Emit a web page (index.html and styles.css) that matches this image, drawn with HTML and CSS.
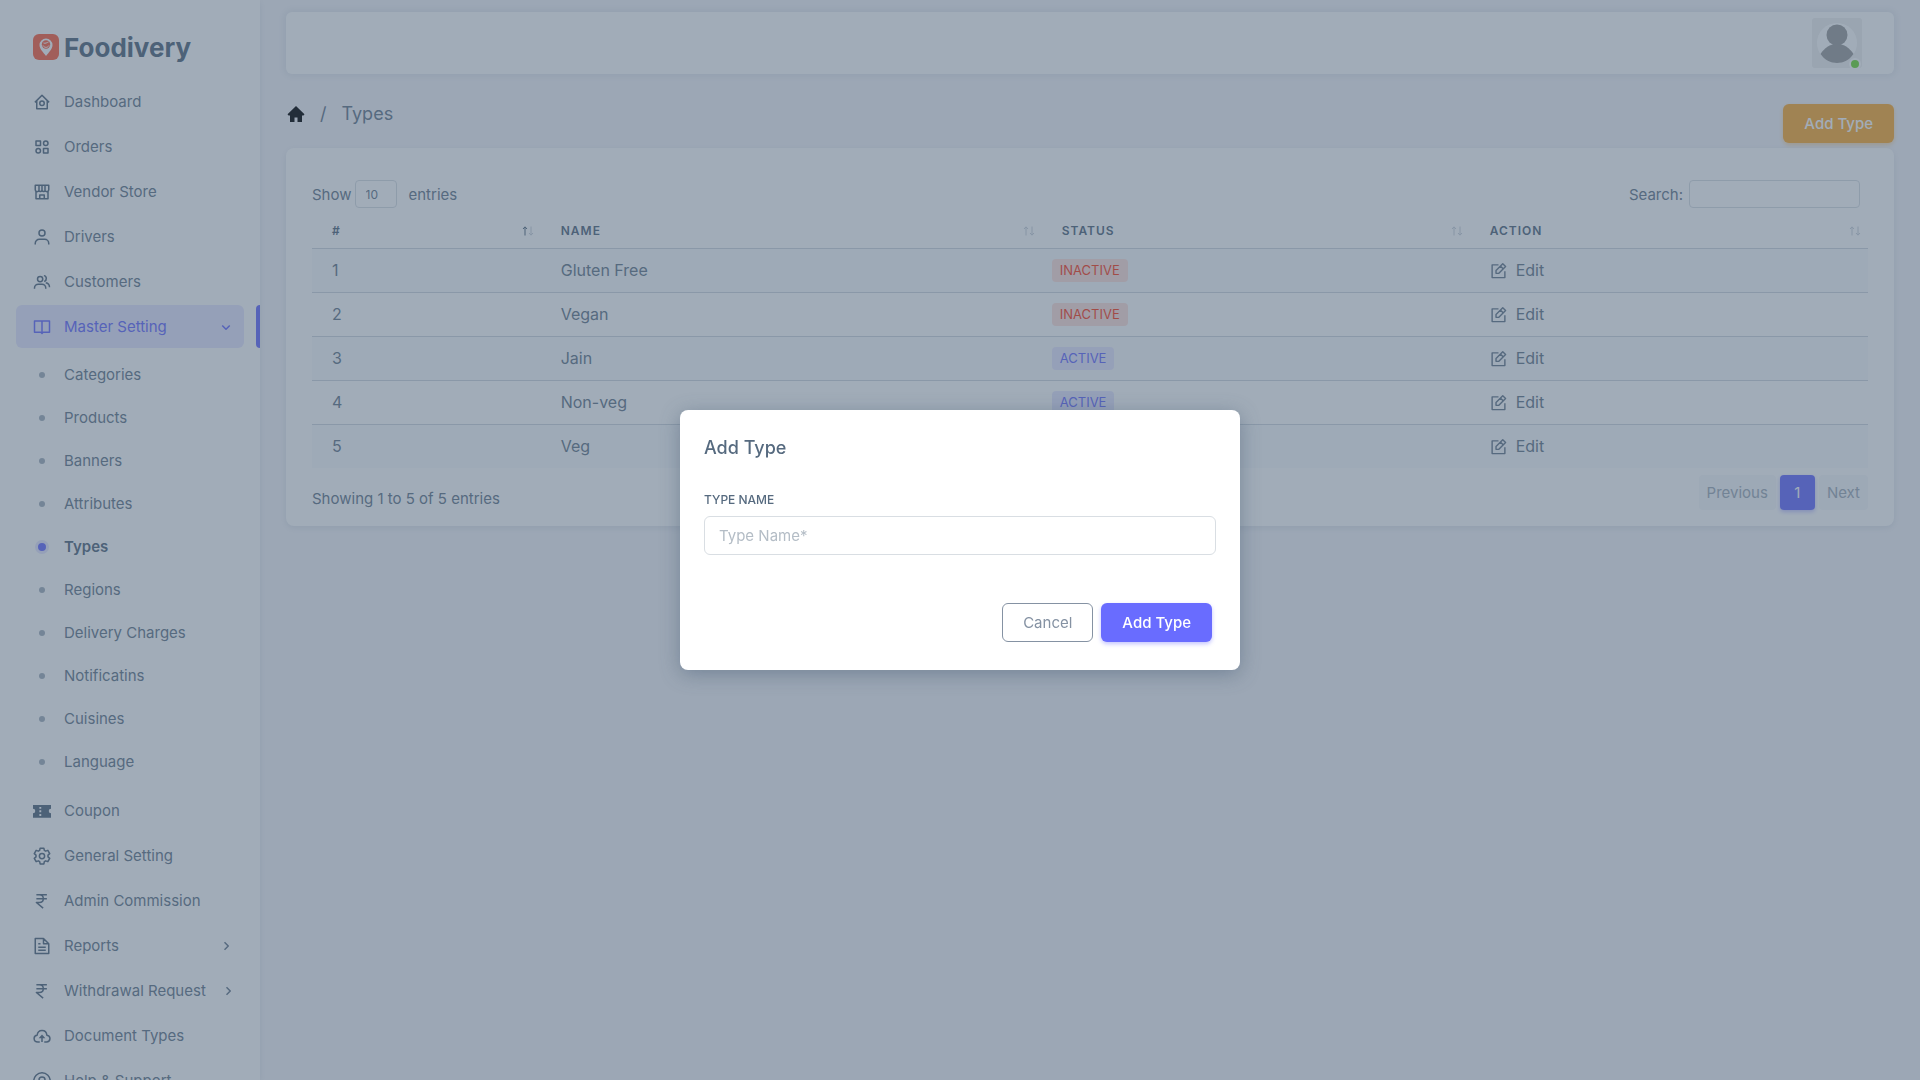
FILE: index.html
```
<!DOCTYPE html>
<html lang="en">
<head>
    <meta charset="UTF-8">
    <meta name="viewport" content="width=device-width, initial-scale=1.0">
    <title>Types - Foodivery</title>
    <link rel="stylesheet" href="styles.css">
</head>
<body>

    <svg class="sprite" aria-hidden="true">
        <symbol id="i-home" viewBox="0 0 24 24"><path d="M2.5 12.5 12 3l9.500 9.500M5 10.500V21h14V10.500"/><circle cx="12" cy="13.500" r="3"/></symbol>
        <symbol id="i-grid" viewBox="0 0 24 24"><path d="M4 4h6v6H4zM14 14h6v6h-6z"/><circle cx="17" cy="7" r="3"/><circle cx="7" cy="17" r="3"/></symbol>
        <symbol id="i-store" viewBox="0 0 24 24"><path d="M4 11v10h16V11M3 3h18v6a2.500 2.500 0 0 1-4.500 1.500A3 3 0 0 1 12 10a3 3 0 0 1-4.500.500A2.500 2.500 0 0 1 3 9zM8 3v7M12 3v7M16 3v7M9 21v-5h6v5"/></symbol>
        <symbol id="i-user" viewBox="0 0 24 24"><circle cx="12" cy="6.500" r="4"/><path d="M3 22v-1.500a5.500 5.500 0 0 1 5.500-5.500h7a5.500 5.500 0 0 1 5.500 5.500V22"/></symbol>
        <symbol id="i-users" viewBox="0 0 24 24"><circle cx="9.500" cy="8" r="3.500"/><path d="M2 21v-1a5 5 0 0 1 5-5h5a5 5 0 0 1 5 5v1M14.500 3.500c4 .5 4.500 6 .5 8M17 13c3 .5 5 3 5 6"/></symbol>
        <symbol id="i-book" viewBox="0 0 24 24"><path d="M2 4h20v15h-8.500L12 20.500 10.500 19H2zM12 4v16"/></symbol>
        <symbol id="i-coupon" viewBox="0 0 24 24"><path class="fill" fill-rule="evenodd" d="M0 4h24v5a3 3 0 0 0 0 6v6H0v-6a3 3 0 0 0 0-6zM8.500 6.500v2.500h2.500V6.500zM8.500 11v2.500h2.500V11zM8.500 16v2.500h2.500V16z"/></symbol>
        <symbol id="i-cog" viewBox="0 0 24 24"><circle cx="12" cy="12" r="3.500"/><path d="M9.500 1.500h5l.6 3 1.800 1 2.900-1 2.500 4.300-2.300 2v2.400l2.300 2-2.500 4.300-2.900-1-1.800 1-.6 3h-5l-.6-3-1.800-1-2.900 1-2.500-4.300 2.300-2v-2.400l-2.300-2 2.500-4.300 2.900 1 1.800-1z"/></symbol>
        <symbol id="i-rupee" viewBox="0 0 24 24"><path d="M4.500 3.500h14M4.500 9h14M4.500 3.500h4c7 0 7 10.500 0 10.500h-4l9 7.500"/></symbol>
        <symbol id="i-file" viewBox="0 0 24 24"><path d="M3 2h11l7 7v13H3zM14 2v7h7M7 9h3M7 13.500h10M7 17.500h10"/></symbol>
        <symbol id="i-cloud" viewBox="0 0 24 24"><path d="M9 20H6.500C0 20 0 11.500 5.500 11c1-8 12-8.500 13 0 6 1 5 9-.5 9h-3M12 20v-6"/><path class="fill" d="m7.500 15 4.500-5 4.500 5z"/></symbol>
        <symbol id="i-help" viewBox="0 0 24 24"><circle cx="12" cy="12" r="11"/><path d="M8 10.500c0-5.500 8-5 8-.5 0 2.500-4 2.500-4 5M12 17v2"/></symbol>
        <symbol id="i-down" viewBox="0 0 24 24"><path d="m7 10 5 5 5-5"/></symbol>
        <symbol id="i-right" viewBox="0 0 24 24"><path d="m10 7 5 5-5 5"/></symbol>
        <symbol id="i-sort" viewBox="0 0 12 10"><path class="up" d="M3 9.500V1M1 3l2-2.200L5 3"/><path class="down" d="M9 .5V9M7 7l2 2.200L11 7"/></symbol>
        <symbol id="i-sort-asc" viewBox="0 0 12 10"><path stroke="#566a7f" d="M3 9.500V1M1 3l2-2.200L5 3"/><path d="M9 .5V9M7 7l2 2.200L11 7"/></symbol>
        <symbol id="i-edit" viewBox="0 0 24 24"><path d="M12 4H3v18h18V13M8.500 16v-4l9.500-9.500 4 4-9.500 9.500zM15 6l3.500 3.500"/></symbol>
    </svg>

    <div class="layout">
        <aside class="sidebar">
            <a href="#" class="brand">
                <svg class="brand-logo" viewBox="0 0 26 26" aria-hidden="true">
                    <rect width="26" height="26" rx="6" fill="#ff6243"/>
                    <path d="M13 22C10 18 6.500 15 6.500 11a6.500 6.500 0 0 1 13 0c0 4-3.500 7-6.500 11z" fill="#fff"/>
                    <circle cx="13" cy="10.500" r="4.200" fill="#ff6243"/>
                    <path d="M10 11.500c1.500 2.500 4.500 2.500 6 0M10.500 9c2 .8 3.500-.5 5-1" fill="none" stroke="#fff"/>
                </svg>
                <span>Foodivery</span>
            </a>
            <nav class="menu">
                <a href="#" class="menu-link"><svg class="icon"><use href="#i-home"/></svg>Dashboard</a>
                <a href="#" class="menu-link"><svg class="icon"><use href="#i-grid"/></svg>Orders</a>
                <a href="#" class="menu-link"><svg class="icon"><use href="#i-store"/></svg>Vendor Store</a>
                <a href="#" class="menu-link"><svg class="icon"><use href="#i-user"/></svg>Drivers</a>
                <a href="#" class="menu-link"><svg class="icon"><use href="#i-users"/></svg>Customers</a>
                <a href="#" class="menu-link active"><svg class="icon"><use href="#i-book"/></svg>Master Setting<svg class="icon arrow"><use href="#i-down"/></svg></a>
                <div class="menu-sub">
                    <a href="#" class="sub-link">Categories</a>
                    <a href="#" class="sub-link">Products</a>
                    <a href="#" class="sub-link">Banners</a>
                    <a href="#" class="sub-link">Attributes</a>
                    <a href="#" class="sub-link active">Types</a>
                    <a href="#" class="sub-link">Regions</a>
                    <a href="#" class="sub-link">Delivery Charges</a>
                    <a href="#" class="sub-link">Notificatins</a>
                    <a href="#" class="sub-link">Cuisines</a>
                    <a href="#" class="sub-link">Language</a>
                </div>
                <a href="#" class="menu-link"><svg class="icon"><use href="#i-coupon"/></svg>Coupon</a>
                <a href="#" class="menu-link"><svg class="icon"><use href="#i-cog"/></svg>General Setting</a>
                <a href="#" class="menu-link"><svg class="icon"><use href="#i-rupee"/></svg>Admin Commission</a>
                <a href="#" class="menu-link"><svg class="icon"><use href="#i-file"/></svg>Reports<svg class="icon arrow"><use href="#i-right"/></svg></a>
                <a href="#" class="menu-link"><svg class="icon"><use href="#i-rupee"/></svg>Withdrawal Request<svg class="icon arrow"><use href="#i-right"/></svg></a>
                <a href="#" class="menu-link"><svg class="icon"><use href="#i-cloud"/></svg>Document Types</a>
                <a href="#" class="menu-link"><svg class="icon"><use href="#i-help"/></svg>Help &amp; Support</a>
            </nav>
        </aside>

        <main class="content">
            <header class="navbar">
                <button type="button" class="avatar" aria-label="Account">
                    <svg viewBox="0 0 50 50" aria-hidden="true">
                        <rect width="50" height="50" rx="3" fill="#f0f0f0"/>
                        <circle cx="25" cy="25" r="20" fill="#fff"/>
                        <circle cx="25" cy="17" r="10.500" fill="#9d9d9d"/>
                        <path d="M8.500 36c4-6 9-10 16.500-10s12.500 4 16.500 10c-4 6-10 9-16.500 9s-12.500-3-16.500-9z" fill="#9d9d9d"/>
                    </svg>
                    <span class="online"></span>
                </button>
            </header>

            <div class="page-head">
                <nav class="breadcrumb" aria-label="Breadcrumb">
                    <a href="#" aria-label="Home"><svg viewBox="0 0 18 18"><path d="M9 1 .5 9.300 1.500 10.500H3V17h4.500v-4.500h3V17H15v-6.500h1.500l1-1.200z"/></svg></a>
                    <span>/</span>
                    <span>Types</span>
                </nav>
                <button type="button" class="btn btn-warning">Add Type</button>
            </div>

            <section class="card">
                <div class="table-tools">
                    <label class="show">Show <select class="length"><option>10</option></select> entries</label>
                    <label class="search">Search: <input type="search"></label>
                </div>
                <table class="types">
                    <thead>
                        <tr>
                            <th class="col-id"><span class="head">#<svg class="sort"><use href="#i-sort-asc"/></svg></span></th>
                            <th class="col-name"><span class="head">Name<svg class="sort"><use href="#i-sort"/></svg></span></th>
                            <th class="col-status"><span class="head">Status<svg class="sort"><use href="#i-sort"/></svg></span></th>
                            <th><span class="head">Action<svg class="sort"><use href="#i-sort"/></svg></span></th>
                        </tr>
                    </thead>
                    <tbody>
                        <tr>
                            <td>1</td><td>Gluten Free</td>
                            <td class="status"><span class="badge danger">Inactive</span></td>
                            <td><a href="#" class="edit"><svg class="icon"><use href="#i-edit"/></svg>Edit</a></td>
                        </tr>
                        <tr>
                            <td>2</td><td>Vegan</td>
                            <td class="status"><span class="badge danger">Inactive</span></td>
                            <td><a href="#" class="edit"><svg class="icon"><use href="#i-edit"/></svg>Edit</a></td>
                        </tr>
                        <tr>
                            <td>3</td><td>Jain</td>
                            <td class="status"><span class="badge">Active</span></td>
                            <td><a href="#" class="edit"><svg class="icon"><use href="#i-edit"/></svg>Edit</a></td>
                        </tr>
                        <tr>
                            <td>4</td><td>Non-veg</td>
                            <td class="status"><span class="badge">Active</span></td>
                            <td><a href="#" class="edit"><svg class="icon"><use href="#i-edit"/></svg>Edit</a></td>
                        </tr>
                        <tr>
                            <td>5</td><td>Veg</td>
                            <td class="status"><span class="badge">Active</span></td>
                            <td><a href="#" class="edit"><svg class="icon"><use href="#i-edit"/></svg>Edit</a></td>
                        </tr>
                    </tbody>
                </table>
                <div class="table-foot">
                    <div class="info">Showing 1 to 5 of 5 entries</div>
                    <div class="pagination">
                        <button type="button" disabled>Previous</button>
                        <button type="button" class="current">1</button>
                        <button type="button" disabled>Next</button>
                    </div>
                </div>
            </section>
        </main>
    </div>

    <div class="backdrop">
        <form class="modal" role="dialog" aria-labelledby="modalTitle">
            <h5 id="modalTitle">Add Type</h5>
            <label for="typeName">Type Name</label>
            <input type="text" id="typeName" placeholder="Type Name*">
            <div class="modal-footer">
                <button type="button" class="btn btn-outline">Cancel</button>
                <button type="submit" class="btn btn-primary">Add Type</button>
            </div>
        </form>
    </div>

</body>
</html>
```
FILE: styles.css
```
*,
*::before,
*::after {
    margin: 0;
    padding: 0;
    box-sizing: border-box;
}
body {
    height: 100vh;
    overflow: hidden;
    background: #f5f5f9;
    color: #697a8d;
    font-family: 'Inter', sans-serif;
    font-size: 15px;
    line-height: 23px;
}
a {
    color: inherit;
    text-decoration: none;
}
button,
input,
select {
    font-family: inherit;
    color: inherit;
}
.sprite {
    display: none;
}
.icon {
    width: 18px;
    height: 18px;
    flex: none;
    fill: none;
    stroke: currentColor;
    stroke-width: 2;
    stroke-linejoin: round;
}
.fill {
    fill: currentColor;
    stroke: none;
}
.layout {
    display: flex;
    height: 100vh;
}

/* sidebar */
.sidebar {
    width: 260px;
    flex: none;
    overflow: hidden;
    background: #fff;
    box-shadow: 0 2px 6px rgba(67, 89, 113, 0.12);
}
.brand {
    display: flex;
    align-items: center;
    gap: 5px;
    height: 80px;
    padding: 14px 33px 0;
    color: #566a7f;
    font-size: 26px;
    font-weight: 700;
}
.brand-logo {
    width: 26px;
    height: 26px;
}
.menu {
    display: flex;
    flex-direction: column;
    gap: 2px;
}
.menu-link {
    display: flex;
    align-items: center;
    gap: 13px;
    height: 43px;
    margin: 0 16px;
    padding: 0 17px;
    border-radius: 6px;
    white-space: nowrap;
}
.menu-link .icon {
    color: #566a7f;
}
.menu-link.active {
    position: relative;
    background: #e7e7ff;
    color: #696cff;
}
.menu-link.active .icon {
    color: #696cff;
}
.menu-link.active::after {
    content: "";
    position: absolute;
    top: 0;
    right: -16px;
    width: 4px;
    height: 100%;
    background: #696cff;
    border-radius: 4px 0 0 4px;
}
.menu-link .arrow {
    margin: 0 -8px 0 auto;
    color: inherit;
}
.menu-sub {
    padding: 3px 0 4px;
}
.sub-link {
    display: flex;
    align-items: center;
    gap: 19px;
    height: 43px;
    padding-left: 39px;
}
.sub-link::before {
    content: "";
    width: 6px;
    height: 6px;
    border-radius: 50%;
    background: #a5b1bd;
}
.sub-link.active {
    gap: 15px;
    padding-left: 35px;
    color: #566a7f;
    font-weight: 600;
}
.sub-link.active::before {
    width: 14px;
    height: 14px;
    border: 3px solid #e7e7ff;
    background: #696cff;
}

/* top bar and page head */
.content {
    flex: 1;
    padding: 12px 26px;
}
.navbar {
    display: flex;
    justify-content: flex-end;
    align-items: center;
    height: 62px;
    padding: 0 32px;
    background: #fff;
    border-radius: 6px;
    box-shadow: 0 0 6px 3px rgba(67, 89, 113, 0.08);
}
.avatar {
    position: relative;
    width: 50px;
    height: 50px;
    border: none;
    background: none;
}
.avatar svg {
    display: block;
}
.online {
    position: absolute;
    right: 1px;
    bottom: -2px;
    width: 12px;
    height: 12px;
    border: 2px solid #fff;
    border-radius: 50%;
    background: #71dd37;
}
.page-head {
    display: flex;
    justify-content: space-between;
    align-items: flex-start;
    padding: 30px 0 5px;
}
.breadcrumb {
    display: flex;
    align-items: center;
    gap: 15px;
    padding: 0 1px;
    font-size: 18px;
    line-height: 20px;
}
.breadcrumb svg {
    display: block;
    width: 18px;
    height: 18px;
    fill: #000;
}
.btn {
    height: 39px;
    padding: 0 20px;
    border: 1px solid transparent;
    border-radius: 6px;
    color: #fff;
    font-size: 15px;
    font-weight: 500;
}
.btn-warning {
    background: #fdac34;
    box-shadow: 0 2px 4px rgba(253, 172, 52, 0.4);
}
.btn-primary {
    background: #696cff;
    box-shadow: 0 2px 4px rgba(105, 108, 255, 0.4);
}
.btn-outline {
    background: #fff;
    border-color: #8592a3;
    color: #8592a3;
    font-weight: 400;
}

/* table card */
.card {
    padding: 32px 26px 16px;
    background: #fff;
    border-radius: 8px;
    box-shadow: 0 2px 6px rgba(67, 89, 113, 0.12);
}
.table-tools {
    display: flex;
    justify-content: space-between;
    align-items: center;
    height: 28px;
    padding-right: 8px;
}
.show {
    display: flex;
    align-items: center;
    gap: 3px;
}
.length {
    appearance: none;
    width: 42px;
    height: 28px;
    margin-right: 9px;
    padding-left: 10px;
    border: 1px solid #d9dee3;
    border-radius: 4px;
    background: #fff;
    font-size: 12px;
}
.search {
    display: flex;
    align-items: center;
    gap: 6px;
}
.search input {
    width: 171px;
    height: 28px;
    border: 1px solid #d9dee3;
    border-radius: 4px;
}
.types {
    width: 100%;
    margin-top: 6px;
    border-collapse: collapse;
    table-layout: fixed;
    font-size: 16px;
}
.types th {
    height: 34px;
    padding: 0 7px 0 20px;
    color: #566a7f;
    font-size: 12px;
    font-weight: 600;
    letter-spacing: 1px;
    text-align: left;
    text-transform: uppercase;
}
.head {
    display: flex;
    justify-content: space-between;
    align-items: center;
}
.col-id {
    width: 14.7%;
}
.col-name {
    width: 32.2%;
}
.col-status {
    width: 27.5%;
}
.sort {
    width: 12px;
    height: 10px;
    fill: none;
    stroke: #c9d0d8;
    stroke-width: 1;
}
.types td {
    height: 44px;
    padding: 0 20px;
    border-top: 1px solid #d0d7de;
}
.types tbody tr:nth-child(odd) {
    background: #f9fafc;
}
.types .status {
    padding-left: 10px;
}
.badge {
    display: inline-block;
    padding: 0 8px;
    border-radius: 4px;
    background: #e7e7ff;
    color: #696cff;
    font-size: 13px;
    text-transform: uppercase;
    vertical-align: middle;
}
.badge.danger {
    background: #ffe0db;
    color: #ff3e1d;
}
.edit {
    display: flex;
    align-items: center;
    gap: 9px;
}
.edit .icon {
    width: 17px;
    height: 17px;
}
.table-foot {
    display: flex;
    justify-content: space-between;
    align-items: flex-start;
    padding-top: 7px;
}
.info {
    padding-top: 12px;
}
.pagination {
    display: flex;
    gap: 4px;
}
.pagination button {
    height: 35px;
    padding: 0 8px;
    border: none;
    border-radius: 4px;
    background: #f7f8fa;
    color: #a1acb8;
    font-size: 15px;
}
.pagination .current {
    width: 35px;
    background: #696cff;
    color: #fff;
    box-shadow: 0 2px 4px rgba(105, 108, 255, 0.4);
}

/* dialog */
.backdrop {
    position: fixed;
    inset: 0;
    display: flex;
    justify-content: center;
    align-items: center;
    background: rgba(67, 89, 113, 0.5);
}
.modal {
    width: 560px;
    max-width: 100%;
    padding: 24px 24px 28px;
    background: #fff;
    border-radius: 8px;
    box-shadow: 0 4px 20px rgba(67, 89, 113, 0.45);
}
.modal h5 {
    margin-bottom: 28px;
    color: #566a7f;
    font-size: 18px;
    font-weight: 500;
    line-height: 28px;
}
.modal label {
    display: block;
    margin-bottom: 6px;
    color: #566a7f;
    font-size: 12px;
    font-weight: 500;
    line-height: 20px;
    text-transform: uppercase;
}
.modal input {
    display: block;
    width: 100%;
    height: 39px;
    padding: 0 14px;
    border: 1px solid #d9dee3;
    border-radius: 6px;
    font-size: 15px;
}
.modal input::placeholder {
    color: #b4bdc6;
}
.modal-footer {
    display: flex;
    justify-content: flex-end;
    gap: 8px;
    padding: 48px 4px 0 0;
}
```
